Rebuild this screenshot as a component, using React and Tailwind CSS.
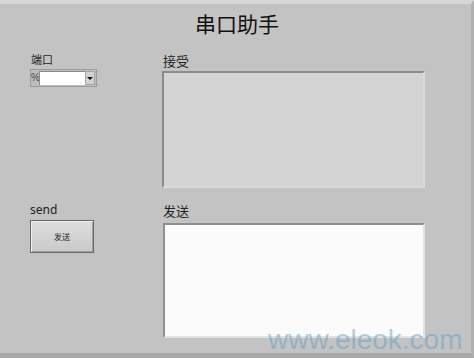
import React from "react";

export default function App() {
  const cjk = { fontFamily: '"Noto Sans CJK SC", "Noto Sans", sans-serif' };
  return (
    <div
      className="relative w-[474px] h-[358px] overflow-hidden bg-[#c3c3c3] border-t-[4px] border-t-[#d7d7d7] border-b-[5px] border-b-[#a9a9a9] border-r-[3px] border-r-[#b0b0b0] flex flex-col"
      style={cjk}
    >
      <div className="pt-[9px] pl-[3px] text-center text-[21px] leading-[21px] text-[#111]">
        串口助手
      </div>

      <div className="flex mt-[20px] pl-[30px]">
        {/* left column */}
        <div className="w-[67px] flex flex-col">
          <div className="pl-[1px] text-[11px] leading-[11px] text-[#222]">端口</div>
          <div className="mt-[4px] h-[18px] w-[67px] flex border border-[#9c9c9c] bg-[#bdbdbd] p-[1px]">
            <div className="w-[7px] flex items-center justify-center text-[10px] leading-none text-[#444] font-['Liberation_Sans',sans-serif]">
              %
            </div>
            <div className="flex-1 bg-white border-t border-l border-[#8a8a8a]"></div>
            <div className="w-[10px] bg-[#d2d2d2] border border-[#a5a5a5] flex items-center justify-center">
              <div className="w-0 h-0 border-l-[3px] border-r-[3px] border-t-[3px] border-l-transparent border-r-transparent border-t-[#111]"></div>
            </div>
          </div>
          <div
            className="mt-[117px] text-[12px] leading-[12px] text-[#222]"
            style={{ fontFamily: '"Noto Sans", sans-serif' }}
          >
            send
          </div>
          <div className="mt-[4px] w-[64px] h-[33px] border border-[#6a6a6a] bg-gradient-to-b from-[#dedede] to-[#c9c9c9] shadow-[inset_1px_1px_0_#efefef,inset_-1px_-1px_0_#a0a0a0] flex items-center justify-center text-[8px] leading-none text-[#222]">
            发送
          </div>
        </div>

        {/* right column */}
        <div className="ml-[65px] w-[263px] flex flex-col">
          <div className="pl-[1px] text-[13px] leading-[13px] text-[#222]">接受</div>
          <div className="mt-[4px] h-[117px] bg-[#d4d4d4] border-t-[2px] border-l-[2px] border-[#8c8c8c] border-r-[2px] border-r-[#dadada] border-b-[2px] border-b-[#dadada]"></div>
          <div className="mt-[16px] pl-[1px] text-[13px] leading-[13px] text-[#222]">发送</div>
          <div className="mt-[6px] ml-[1px] h-[115px] bg-[#fbfbfb] border-t-[2px] border-l-[2px] border-[#8f8f8f] border-r-[2px] border-r-[#e2e2e2] border-b-[2px] border-b-[#e2e2e2]"></div>
        </div>
      </div>

      <div
        className="absolute left-[268px] top-[322px] text-[28px] leading-[28px] text-[rgba(100,160,195,0.5)] whitespace-nowrap"
        style={{ fontFamily: '"Liberation Sans", Arial, sans-serif' }}
      >
        www.eleok.com
      </div>
    </div>
  );
}
